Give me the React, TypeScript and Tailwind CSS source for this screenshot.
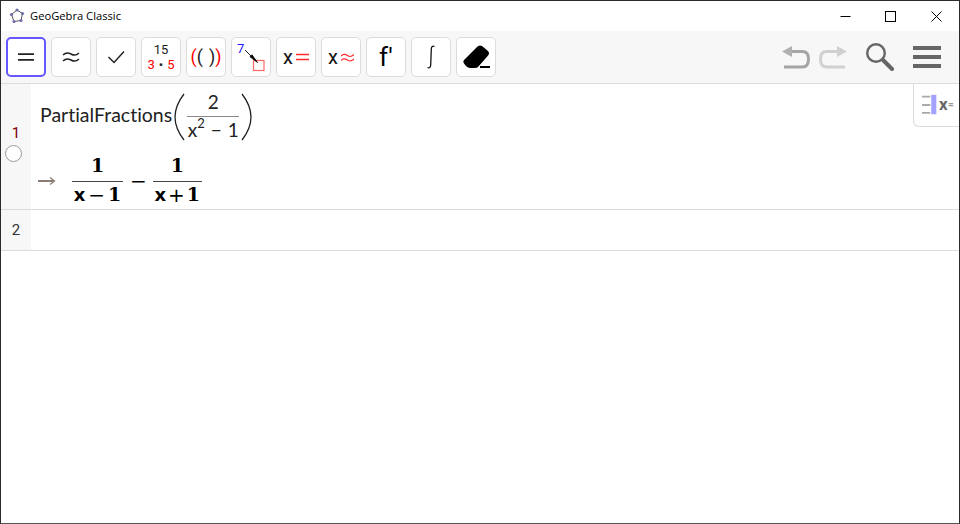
import React from "react";

const sans = "font-['Roboto','Liberation_Sans',sans-serif]";

function ToolBtn({ active, children }: { active?: boolean; children?: React.ReactNode }) {
  return (
    <div
      className={
        "relative flex h-10 w-10 shrink-0 items-center justify-center overflow-hidden rounded-[5px] bg-white " +
        (active ? "border-2 border-[#6557ff]" : "border border-[#dcdcdc]")
      }
    >
      {children}
    </div>
  );
}

function Frac({ top, bottom, w, bold, topPad, botPad }: { top: React.ReactNode; bottom: React.ReactNode; w: string; bold?: boolean; topPad: string; botPad: string }) {
  return (
    <div className={"flex flex-col items-center " + w}>
      <div className={"flex h-[24px] items-end justify-center leading-none " + topPad}>{top}</div>
      <div className={"h-px w-full " + (bold ? "bg-[#444]" : "bg-[#888]")} />
      <div className={"flex h-[24px] items-start justify-center leading-none " + botPad}>{bottom}</div>
    </div>
  );
}

const serifOne = "font-['DejaVu_Serif',serif] text-[19px] font-bold";
const boldX = "font-['DejaVu_Sans',sans-serif] text-[18px] font-bold";
const boldOp = "font-['DejaVu_Sans',sans-serif] text-[20px]";

export default function App() {
  return (
    <div className={"relative flex h-[524px] w-[960px] flex-col overflow-hidden border border-[#2b2b2b] border-b-[#555] bg-white " + sans}>
      {/* title bar */}
      <div className="flex h-[30px] shrink-0 items-center bg-white">
        <svg width="16" height="16" viewBox="0 0 16 16" className="ml-[8px] mr-[5px]">
          <path d="M8 2 L13.5 5.5 L12 12.5 L5 13.5 L2.5 6.5 Z" fill="none" stroke="#555" strokeWidth="1" />
          {[[8, 2], [13.5, 5.5], [12, 12.5], [5, 13.5], [2.5, 6.5]].map(([x, y], i) => (
            <circle key={i} cx={x} cy={y} r="1.6" fill="#6f6fa8" />
          ))}
        </svg>
        <span className="font-['Open_Sans',sans-serif] text-[11.2px] text-black">GeoGebra Classic</span>
        <div className="ml-auto flex h-full items-center">
          <div className="flex h-full w-[45px] items-center justify-center">
            <svg width="11" height="11" viewBox="0 0 11 11"><path d="M0.5 5.5 H10.5" stroke="#000" /></svg>
          </div>
          <div className="mr-px flex h-full w-[45px] items-center justify-center">
            <svg width="11" height="11" viewBox="0 0 11 11"><rect x="0.5" y="0.5" width="10" height="10" fill="none" stroke="#000" /></svg>
          </div>
          <div className="flex h-full w-[45px] items-center justify-center">
            <svg width="11" height="11" viewBox="0 0 11 11"><path d="M0.5 0.5 L10.5 10.5 M10.5 0.5 L0.5 10.5" stroke="#000" /></svg>
          </div>
        </div>
      </div>

      {/* toolbar */}
      <div className="flex h-[53px] shrink-0 items-center gap-[5px] border-b border-[#dcdcdc] bg-[#f7f7f7] pl-[5px]">
        <ToolBtn active>
          <svg width="20" height="12" viewBox="0 0 20 12"><path d="M2 3.2 H18 M2 8.8 H18" stroke="#222" strokeWidth="1.8" /></svg>
        </ToolBtn>
        <ToolBtn>
          <svg width="20" height="14" viewBox="0 0 20 14" fill="none" stroke="#222" strokeWidth="1.5">
            <path d="M2 5 C5 2 7.5 2.5 10 4 S15 6 18 3" />
            <path d="M2 11 C5 8 7.5 8.5 10 10 S15 12 18 9" />
          </svg>
        </ToolBtn>
        <ToolBtn>
          <svg width="20" height="16" viewBox="0 0 20 16" fill="none" stroke="#222" strokeWidth="1.5"><path d="M2.5 8 L8 13.5 L18 2.5" /></svg>
        </ToolBtn>
        <ToolBtn>
          <div className="flex flex-col items-center text-[13px] leading-[15px]">
            <span className="text-[#222]">15</span>
            <span className="text-[#f00]">3<span className="mx-[4px] text-[#222]">•</span>5</span>
          </div>
        </ToolBtn>
        <ToolBtn>
          <div className="flex items-center text-[18px] leading-none">
            <span className="text-[#f00]">(</span>
            <span className="text-[#222]">(</span>
            <span className="ml-[6px] text-[#222]">)</span>
            <span className="text-[#f00]">)</span>
          </div>
        </ToolBtn>
        <ToolBtn>
          <span className="absolute left-[5px] top-[4px] text-[13px] leading-[14px] text-[#1a1aff]">7</span>
          <svg width="38" height="38" viewBox="0 0 38 38" className="absolute left-0 top-0">
            <rect x="21.5" y="22.5" width="10.5" height="10" fill="none" stroke="#f66" strokeWidth="1.2" />
            <path d="M13 12 L24 23" stroke="#222" strokeWidth="1" />
            <path d="M18 18.8 L20 16.8 L25.5 24.5 Z" fill="#000" stroke="#000" strokeWidth="0.8" />
          </svg>
        </ToolBtn>
        <ToolBtn>
          <div className="flex items-center gap-[3px]">
            <span className="text-[20px] leading-none text-[#111]">x</span>
            <svg width="13" height="8" viewBox="0 0 13 8"><path d="M0 1.5 H13 M0 6.5 H13" stroke="#ff2a2a" strokeWidth="1.4" /></svg>
          </div>
        </ToolBtn>
        <ToolBtn>
          <div className="flex items-center gap-[3px]">
            <span className="text-[20px] leading-none text-[#111]">x</span>
            <svg width="13" height="9" viewBox="0 0 13 9" fill="none" stroke="#ff2a2a" strokeWidth="1.1">
              <path d="M0 3 C2.5 0.5 4.5 1 6.5 2.5 S10.5 4 13 1.5" />
              <path d="M0 7.5 C2.5 5 4.5 5.5 6.5 7 S10.5 8.5 13 6" />
            </svg>
          </div>
        </ToolBtn>
        <ToolBtn>
          <span className="text-[26px] leading-none text-black">f′</span>
        </ToolBtn>
        <ToolBtn>
          <svg width="14" height="26" viewBox="0 0 14 26" fill="none" stroke="#111" strokeWidth="1.3">
            <path d="M10.5 2.5 C8.5 1.5 7.5 2.5 7.3 5 L6.7 21 C6.5 23.5 5.5 24.5 3.5 23.5" />
          </svg>
        </ToolBtn>
        <ToolBtn>
          <svg width="38" height="38" viewBox="0 0 38 38" className="absolute left-0 top-0">
            <path d="M20 9 Q22 6.5 25 8 L31 13 Q33 15 31.5 17 L21 29 Q20 30 18 30 H13 Q11 30 9 28 L7 25.5 Q5.5 23.5 7 22 Z" fill="#000" />
            <rect x="23" y="28" width="10" height="2" fill="#000" />
          </svg>
        </ToolBtn>

        <div className="ml-auto mr-[18px] flex items-center">
          <svg width="28" height="24" viewBox="0 0 28 24" fill="none" className="mr-[9px] mt-[1px]">
            <path d="M9 5.5 H20.5 Q26.5 5.5 26.5 13 Q26.5 21 20.5 21 H2" stroke="#a5a5a5" strokeWidth="3" />
            <path d="M0 5.5 L10 0 V11 Z" fill="#b0b0b0" />
          </svg>
          <svg width="28" height="24" viewBox="0 0 28 24" fill="none" className="mr-[19px] mt-[1px]">
            <path d="M19 5.5 H7.5 Q1.5 5.5 1.5 13 Q1.5 21 7.5 21 H26" stroke="#d0d0d0" strokeWidth="3" />
            <path d="M28 5.5 L18 0 V11 Z" fill="#d0d0d0" />
          </svg>
          <svg width="28" height="28" viewBox="0 0 28 28" fill="none" className="mr-[19px]">
            <circle cx="10" cy="10" r="8.8" stroke="#666" strokeWidth="2.4" />
            <path d="M17 17 L26 26" stroke="#666" strokeWidth="4" strokeLinecap="round" />
          </svg>
          <div className="flex w-[28px] flex-col gap-[5px]">
            <div className="h-[4px] bg-[#666]" />
            <div className="h-[4px] bg-[#666]" />
            <div className="h-[4px] bg-[#666]" />
          </div>
        </div>
      </div>

      {/* algebra rows */}
      <div className="flex h-[126px] shrink-0 border-b border-[#dcdcdc]">
        <div className="flex w-[30px] shrink-0 flex-col items-center bg-[#f7f7f7]">
          <span className="mt-[40px] text-[15px] leading-[18px] text-[#7a0000]">1</span>
          <div className="mr-[5px] mt-[3px] h-[17px] w-[17px] rounded-full border border-[#999] bg-white" />
        </div>
        <div className="flex flex-col pl-[9px]">
          <div className="flex h-[65px] items-center font-['Lato',sans-serif] text-[19.5px] text-[#222] [font-variant-ligatures:none]">
            <span className="mb-[4px]">PartialFractions</span>
            <svg width="13" height="48" viewBox="0 0 13 48" fill="none" stroke="#222" strokeWidth="1.3" className="ml-[1px]">
              <path d="M11 1 C4 10 2 18 2 24 C2 30 4 38 11 47" />
            </svg>
            <Frac
              w="w-[52px] ml-[1px]"
              topPad="pb-[5px]"
              botPad="pt-[3px]"
              top={<span className="text-[19px]">2</span>}
              bottom={
                <span className="flex text-[19px] leading-none">
                  x<span className="-mt-[3px] text-[13px]">2</span><span className="mx-[6px]">−</span>1
                </span>
              }
            />
            <svg width="13" height="48" viewBox="0 0 13 48" fill="none" stroke="#222" strokeWidth="1.3" className="ml-[1px]">
              <path d="M2 1 C9 10 11 18 11 24 C11 30 9 38 2 47" />
            </svg>
          </div>
          <div className="flex h-[60px] items-center pt-[4px]">
            <svg width="18" height="10" viewBox="0 0 18 10" fill="none" className="-ml-[2px]">
              <path d="M0 5 H15" stroke="#8b7c73" strokeWidth="2" />
              <path d="M12 1.5 L16.5 5 L12 8.5" stroke="#8b7c73" strokeWidth="1.3" />
            </svg>
            <Frac
              w="w-[51px] ml-[16px]"
              bold
              topPad="pb-[6px]"
              botPad="pt-[3px]"
              top={<span className={serifOne}>1</span>}
              bottom={
                <span className="flex items-center">
                  <span className={boldX}>x</span>
                  <span className={boldOp + " mx-[3px]"}>−</span>
                  <span className={serifOne}>1</span>
                </span>
              }
            />
            <span className={boldOp + " ml-[7px] mr-[6px] leading-none"}>−</span>
            <Frac
              w="w-[49px]"
              bold
              topPad="pb-[6px]"
              botPad="pt-[3px]"
              top={<span className={serifOne}>1</span>}
              bottom={
                <span className="flex items-center">
                  <span className={boldX}>x</span>
                  <span className={boldOp + " mx-[2px]"}>+</span>
                  <span className={serifOne}>1</span>
                </span>
              }
            />
          </div>
        </div>
      </div>
      <div className="flex h-[41px] shrink-0 border-b border-[#dcdcdc]">
        <div className="flex w-[30px] shrink-0 items-center justify-center bg-[#f7f7f7] text-[15px] text-[#333]">2</div>
      </div>

      {/* style-bar tab */}
      <div className="absolute right-0 top-[83px] flex h-[43px] w-[46px] items-center rounded-bl-[6px] border-b border-l border-[#dcdcdc] bg-white">
        <svg width="40" height="24" viewBox="0 0 40 24" className="ml-[8px]">
          <path d="M0 3 H9 M0 12 H9 M0 20.5 H9" stroke="#aaa" strokeWidth="2" />
          <rect x="10" y="1" width="5.5" height="21" fill="#a3a3ff" />
        </svg>
        <span className="absolute left-[25px] top-[10px] text-[17px] font-bold leading-[20px] text-[#666]">x</span>
        <span className="absolute left-[34px] top-[15px] text-[10px] font-bold leading-[12px] text-[#999]">=</span>
      </div>
    </div>
  );
}
